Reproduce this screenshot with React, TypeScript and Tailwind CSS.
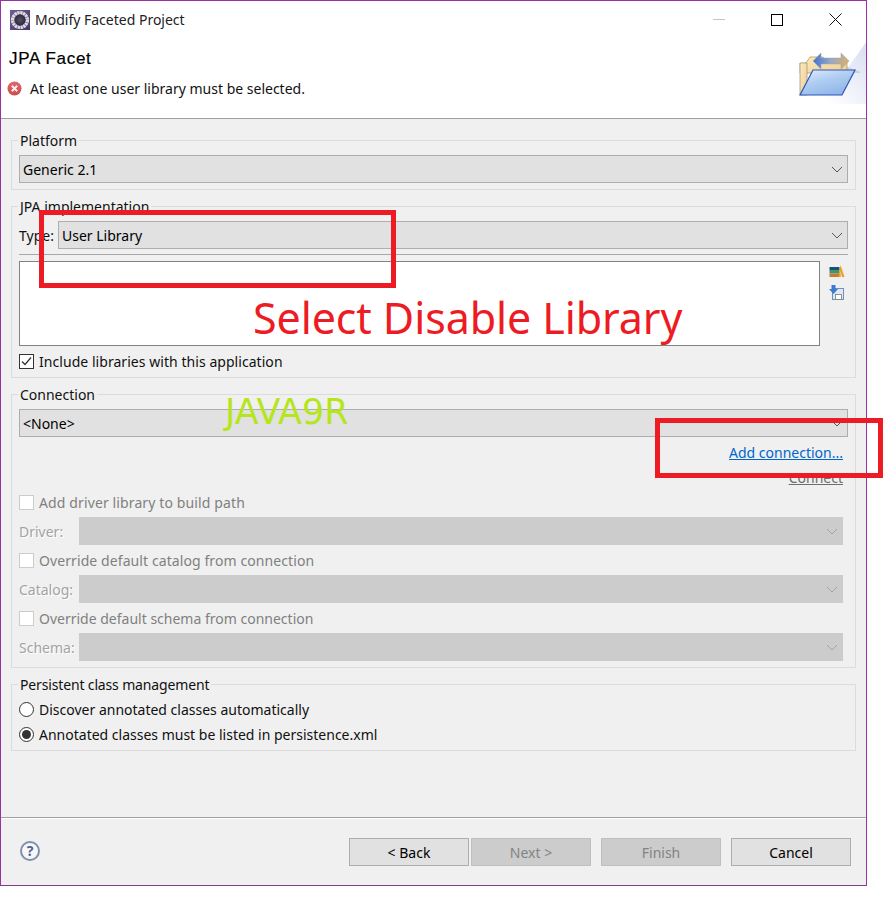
import React from "react";

const font = "font-['Noto_Sans','Open_Sans',sans-serif]";

function Chevron({ off }: { off?: boolean }) {
  return (
    <svg width="12" height="7" viewBox="0 0 12 7" className="shrink-0">
      <path d="M1 1l5 5 5-5" fill="none" stroke={off ? "#a3a3a3" : "#555"} strokeWidth="1" />
    </svg>
  );
}

function Select({ text, off, className }: { text?: string; off?: boolean; className?: string }) {
  return (
    <div
      className={
        "h-[28px] border flex items-center justify-between pl-[3px] pr-[4px] " +
        (off ? "bg-[#cccccc] border-[#cccccc] " : "bg-[#e1e1e1] border-[#adadad] ") +
        (className ?? "")
      }
    >
      <span className="text-[14px] text-black">{text}</span>
      <Chevron off={off} />
    </div>
  );
}

function Group({ title, className, legendClass, children }: { title: string; className?: string; legendClass?: string; children: React.ReactNode }) {
  return (
    <fieldset className={"border border-[#dcdcdc] px-[7px] w-[845px] " + (className ?? "")}>
      <legend className={"-ml-px px-[2px] h-[17px] leading-[18px] text-[14px] text-[#111] " + (legendClass ?? "")}>{title}</legend>
      {children}
    </fieldset>
  );
}

function OffCheck({ label, className, labelClass }: { label: string; className?: string; labelClass?: string }) {
  return (
    <div className={"h-[16px] flex items-center gap-[5px] " + (className ?? "")}>
      <span className="w-[15px] h-[15px] bg-white border border-[#cccccc] shrink-0" />
      <span className={"text-[14px] text-[#808080] " + (labelClass ?? "")}>{label}</span>
    </div>
  );
}

function OffRow({ label, className }: { label: string; className?: string }) {
  return (
    <div className={"flex items-center " + (className ?? "")}>
      <span className="w-[60px] text-[14px] text-[#a3a3a3] [text-shadow:1px_1px_0_#ffffff] shrink-0">{label}</span>
      <Select off className="flex-1 mr-[5px]" />
    </div>
  );
}

function Btn({ label, off, className }: { label: string; off?: boolean; className?: string }) {
  return (
    <div
      className={
        "w-[120px] h-[28px] border flex items-center justify-center text-[14px] " +
        (off ? "bg-[#cccccc] border-[#bfbfbf] text-[#838383] " : "bg-[#e1e1e1] border-[#adadad] text-black ") +
        (className ?? "")
      }
    >
      {label}
    </div>
  );
}

function Radio({ on, label, className }: { on?: boolean; label: string; className?: string }) {
  return (
    <div className={"h-[16px] flex items-center gap-[5px] " + (className ?? "")}>
      <span className="w-[15px] h-[15px] rounded-full bg-white border border-[#333] shrink-0 flex items-center justify-center">
        {on && <span className="w-[9px] h-[9px] rounded-full bg-[#333]" />}
      </span>
      <span className="text-[14px] text-[#111]">{label}</span>
    </div>
  );
}

function EclipseIcon() {
  return (
    <svg width="20" height="20" viewBox="0 0 20 20" className="shrink-0">
      <defs>
        <linearGradient id="eb" x1="0" y1="0" x2="1" y2="1">
          <stop offset="0" stopColor="#6f5f98" />
          <stop offset="1" stopColor="#43346c" />
        </linearGradient>
        <radialGradient id="ec">
          <stop offset="0" stopColor="#55506a" />
          <stop offset="1" stopColor="#2e2a3a" />
        </radialGradient>
      </defs>
      <rect width="20" height="20" fill="url(#eb)" />
      <circle cx="10" cy="10" r="7.4" fill="none" stroke="#dddddd" strokeWidth="3.4" strokeDasharray="2.4 0.5" />
      <circle cx="10" cy="10" r="5.4" fill="url(#ec)" />
    </svg>
  );
}

function ErrorIcon() {
  return (
    <svg width="15" height="15" viewBox="0 0 15 15" className="shrink-0">
      <defs>
        <linearGradient id="er" x1="0" y1="0" x2="0" y2="1">
          <stop offset="0" stopColor="#e0686c" />
          <stop offset="1" stopColor="#cc4a50" />
        </linearGradient>
      </defs>
      <circle cx="7.5" cy="7.5" r="7" fill="url(#er)" />
      <path d="M4.800 4.800l5.400 5.400M10.200 4.800l-5.400 5.400" stroke="#fbeeee" strokeWidth="2" />
    </svg>
  );
}

function FolderBanner() {
  return (
    <svg width="71" height="65" viewBox="0 0 71 65" className="shrink-0">
      <defs>
        <linearGradient id="bg" x1="0" y1="1" x2="1" y2="0.2">
          <stop offset="0.3" stopColor="#ffffff" />
          <stop offset="1" stopColor="#dde2f4" />
        </linearGradient>
        <linearGradient id="fr" x1="0" y1="0" x2="0.6" y2="1">
          <stop offset="0" stopColor="#e4effc" />
          <stop offset="0.45" stopColor="#b3cff2" />
          <stop offset="1" stopColor="#8fb6e8" />
        </linearGradient>
        <linearGradient id="ar" x1="0" y1="0" x2="1" y2="0">
          <stop offset="0" stopColor="#4273d6" />
          <stop offset="0.5" stopColor="#9aa8c4" />
          <stop offset="1" stopColor="#dcb06a" />
        </linearGradient>
        <linearGradient id="bk" x1="0" y1="0" x2="1" y2="1">
          <stop offset="0" stopColor="#fbe9bf" />
          <stop offset="1" stopColor="#efcf8c" />
        </linearGradient>
      </defs>
      <path d="M0 64C26 62 50 34 71 2V64Z" fill="url(#bg)" />
      <path d="M4 23l7-1 28 0 27 10-2 1H4Z" fill="#b8b8b8" opacity="0.5" />
      <path d="M11 23l4-6h13l3 4h21v12H11Z" fill="url(#bk)" stroke="#b99a55" strokeWidth="0.8" />
      <path d="M5 23h7v32H5Z" fill="url(#bk)" stroke="#a59a80" strokeWidth="0.8" />
      <path d="M18 30h42L47 55H5Z" fill="url(#fr)" stroke="#2f55bb" strokeWidth="1.2" />
      <path d="M18 21l8-8v5h20v-5l8 8-8 8v-5H26v5Z" fill="url(#ar)" stroke="#9aa3bb" strokeWidth="0.5" />
    </svg>
  );
}

function BooksIcon() {
  return (
    <svg width="16" height="13" viewBox="0 0 16 13">
      <rect x="0.5" y="2" width="10" height="3" fill="#1f4f78" />
      <rect x="0.5" y="5" width="10" height="3.500" fill="#3a9a66" />
      <rect x="0.5" y="8.500" width="11" height="3.500" fill="#c77a3c" />
      <path d="M9.500 12l2-12 4 12h-2.500l-1.500-6-0.500 6Z" fill="#e8a21c" />
    </svg>
  );
}

function ImportIcon() {
  return (
    <svg width="15" height="15" viewBox="0 0 15 15">
      <rect x="3.500" y="3.500" width="11" height="11" fill="#dfe8f4" stroke="#6f90b8" />
      <rect x="6.500" y="9.500" width="6" height="5" fill="#fff" stroke="#7a7a7a" strokeWidth="0.8" />
      <path d="M2.500 0h4v4h2.500L4.500 9 0 4h2.500Z" fill="#3b7cd0" />
    </svg>
  );
}

export default function App() {
  return (
    <div className={"relative w-[888px] h-[916px] bg-white " + font}>
      <div className="w-[867px] h-[886px] border border-[#9c30a6] border-b-[#843a8c] flex flex-col">
        {/* title bar */}
        <div className="h-[37px] bg-white flex items-center shrink-0">
          <div className="ml-[9px]"><EclipseIcon /></div>
          <span className="ml-[5px] text-[14px] text-[#222]">Modify Faceted Project</span>
          <div className="ml-auto flex items-center">
            <span className="w-[12px] h-px bg-[#c4c4c4]" />
            <span className="ml-[46px] w-[12px] h-[12px] border border-black" />
            <svg width="13" height="13" viewBox="0 0 13 13" className="ml-[46px] mr-[24px]">
              <path d="M0.500 0.500l12 12M12.500 0.500l-12 12" stroke="#111" strokeWidth="1" />
            </svg>
          </div>
        </div>
        {/* banner */}
        <div className="h-[81px] bg-white flex justify-between shrink-0 border-b border-[#a0a0a0]">
          <div className="flex flex-col">
            <span className="ml-[8px] mt-[10px] h-[22px] leading-[22px] text-[17px] font-medium text-black font-['Liberation_Sans',sans-serif] tracking-[0.7px] [-webkit-text-stroke:0.2px_#000]">JPA Facet</span>
            <div className="ml-[6px] mt-[8px] flex items-center gap-[8px]">
              <ErrorIcon />
              <span className="text-[14px] text-[#111]">At least one user library must be selected.</span>
            </div>
          </div>
          <div className="mt-[2px]"><FolderBanner /></div>
        </div>
        {/* body */}
        <div className="flex-1 bg-[#f0f0f0] pl-[10px] pt-[13px]">
          <Group title="Platform" className="pb-[6px]">
            <Select text="Generic 2.1" className="mt-[6px]" />
          </Group>
          <Group title="JPA implementation" className="mt-[8px] pb-[8px]">
            <div className="mt-[6px] flex items-center">
              <span className="w-[39px] text-[14px] text-[#111] shrink-0">Type:</span>
              <Select text="User Library" className="flex-1" />
            </div>
            <div className="mt-[5px] h-px bg-[#a8a8a8]" />
            <div className="mt-[6px] flex">
              <div className="w-[801px] h-[85px] bg-white border border-[#828282]" />
              <div className="ml-[9px] mt-[4px] flex flex-col gap-[7px]">
                <BooksIcon />
                <ImportIcon />
              </div>
            </div>
            <div className="mt-[8px] h-[15px] flex items-center gap-[5px]">
              <span className="w-[15px] h-[15px] bg-white border border-[#333] flex items-center justify-center shrink-0">
                <svg width="11" height="9" viewBox="0 0 11 9"><path d="M1 4.500l3 3 6-7" fill="none" stroke="#333" strokeWidth="1.2" /></svg>
              </span>
              <span className="text-[14px] text-[#111] tracking-[0.05px]">Include libraries with this application</span>
            </div>
          </Group>
          <Group title="Connection" className="mt-[8px] pb-[6px]">
            <Select text="<None>" className="mt-[6px]" />
            <div className="mt-[6px] h-[20px] flex justify-end pr-[5px]">
              <span className="text-[14px] leading-[20px] text-[#0066cc] underline">Add connection...</span>
            </div>
            <div className="mt-[5px] h-[20px] flex justify-end pr-[5px]">
              <span className="text-[14px] leading-[20px] text-[#6d6d6d] underline">Connect</span>
            </div>
            <OffCheck label="Add driver library to build path" className="mt-[6px]" labelClass="tracking-[0.12px]" />
            <OffRow label="Driver:" className="mt-[7px]" />
            <OffCheck label="Override default catalog from connection" className="mt-[7px]" labelClass="tracking-[0.09px]" />
            <OffRow label="Catalog:" className="mt-[7px]" />
            <OffCheck label="Override default schema from connection" className="mt-[7px]" />
            <OffRow label="Schema:" className="mt-[7px]" />
          </Group>
          <Group title="Persistent class management" className="mt-[8px] pb-[8px]" legendClass="tracking-[-0.15px]">
            <Radio label="Discover annotated classes automatically" className="mt-[8px]" />
            <Radio on label="Annotated classes must be listed in persistence.xml" className="mt-[9px]" />
          </Group>
        </div>
        {/* footer */}
        <div className="h-[68px] shrink-0 bg-[#f0f0f0] border-t border-[#a0a0a0] flex flex-col">
          <div className="h-px bg-white" />
          <div className="flex items-start pt-[19px] pl-[19px] pr-[15px]">
            <span className="mt-[3px] w-[20px] h-[20px] rounded-full border-2 border-[#7f90ae] bg-[#f7f7f7] flex items-center justify-center text-[14px] leading-none font-bold text-[#4f6590]">?</span>
            <Btn label="< Back" className="ml-auto" />
            <Btn label="Next >" off className="ml-[2px]" />
            <Btn label="Finish" off className="ml-[10px]" />
            <Btn label="Cancel" className="ml-[10px]" />
          </div>
        </div>
      </div>
      {/* annotations drawn over the dialog */}
      <div className="absolute left-[39px] top-[210px] w-[357px] h-[78px] border-[5px] border-[#ed1c24]" />
      <div className="absolute left-[655px] top-[418px] w-[228px] h-[60px] border-[5px] border-[#ed1c24]" />
      <span className="absolute left-[253px] top-[288px] text-[43px] tracking-[-0.1px] leading-[60px] text-[#ed1c24] whitespace-nowrap">Select Disable Library</span>
      <span className="absolute left-[225px] top-[391px] text-[35px] leading-[42px] text-[#b5e61d] whitespace-nowrap font-['DejaVu_Sans',sans-serif]">JAVA9R</span>
    </div>
  );
}
